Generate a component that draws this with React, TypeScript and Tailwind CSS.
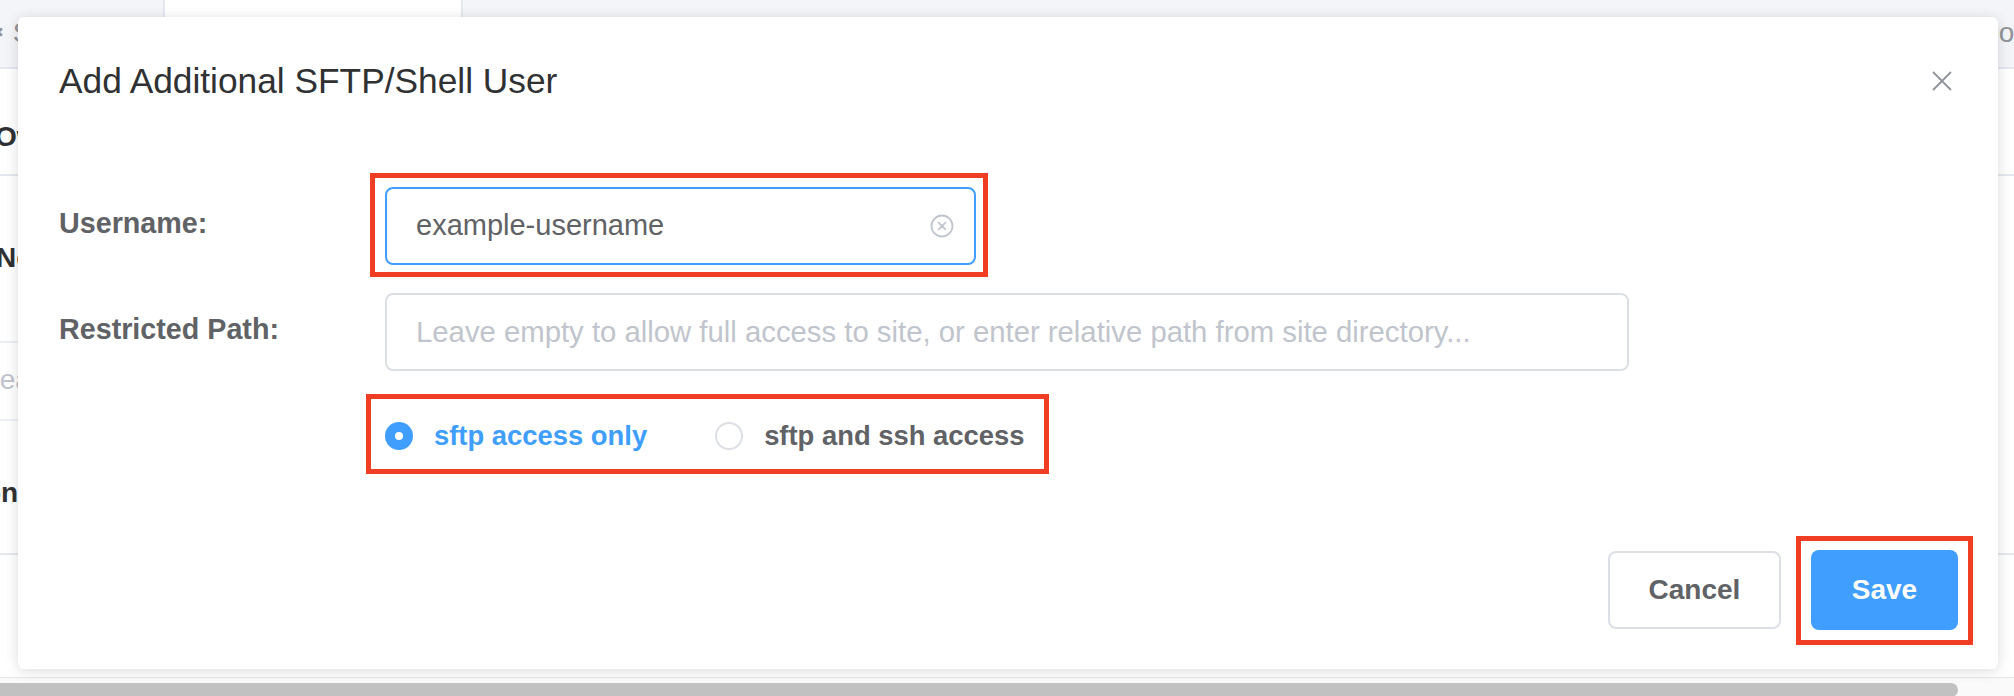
import React from 'react';

const RED_BOX = 'pointer-events-none absolute border-[5px] border-[#ef3e23]';

function Backdrop() {
  return (
    <div className="flex h-full flex-col">
      {/* tab header */}
      <div className="flex h-[69px] border-b-2 border-[#e4e7ed] bg-[#f4f5f8] text-[28px] text-[#909399]">
        <div className="w-[163px] overflow-hidden whitespace-nowrap pt-[12px]">
          <span className="ml-[-20px]">⚙ SFTP</span>
        </div>
        <div className="w-[300px] border-x-2 border-[#e4e7ed] bg-white" />
        <div className="flex flex-1 justify-end overflow-hidden whitespace-nowrap pt-[12px]">
          <span className="mr-[-16px]">Action</span>
        </div>
      </div>

      {/* rows of the page behind */}
      <div className="flex h-[107px] border-b-2 border-[#e4e7ed] text-[28px] font-bold leading-[32px] text-[#303133]">
        <div className="w-[163px] overflow-hidden whitespace-nowrap pt-[52px]">
          <span className="ml-[-5px]">Owner</span>
        </div>
      </div>
      <div className="flex h-[379px] border-b-2 border-[#e4e7ed] text-[28px] leading-[32px]">
        <div className="flex w-[163px] flex-col overflow-hidden whitespace-nowrap">
          <div className="h-[167px] border-b-2 border-[#ebeef5] pt-[66px] font-bold text-[#303133]">
            <span className="ml-[-4px]">New</span>
          </div>
          <div className="h-[78px] border-b-2 border-[#ebeef5] pt-[21px] text-[#c0c4cc]">
            <span className="ml-[-19px]">Search</span>
          </div>
          <div className="flex-1 pt-[56px] font-bold text-[#303133]">
            <span className="ml-[-16px]">one</span>
          </div>
        </div>
      </div>
      <div className="flex-1" />

      {/* horizontal scrollbar */}
      <div className="h-[19px] border-t border-[#e6e6e6] bg-[#fafafa] pt-[5px]">
        <div className="h-[14px] w-[1958px] rounded-r-full bg-[#c1c1c1]" />
      </div>
    </div>
  );
}

function ClearIcon() {
  return (
    <svg width="24" height="24" viewBox="0 0 24 24" fill="none" stroke="#c0c4cc" strokeWidth="1.8">
      <circle cx="12" cy="12" r="10.5" />
      <path d="M8.6 8.6L15.4 15.4M15.4 8.6L8.6 15.4" strokeLinecap="round" />
    </svg>
  );
}

export default function App() {
  return (
    <div className="relative h-[696px] w-full overflow-hidden bg-white font-['Liberation_Sans',Arial,sans-serif]">
      <Backdrop />

      {/* Dialog */}
      <div className="absolute left-[18px] top-[17px] w-[1980px] rounded-[6px] bg-white pb-[39px] pl-[41px] pr-[40px] pt-[40px] shadow-[0_2px_14px_rgba(0,0,0,0.14)]">
        <h2 className="text-[35.3px] leading-[48px] text-[#303133]">Add Additional SFTP/Shell User</h2>
        <button className="absolute right-[46px] top-[54px] h-5 w-5">
          <svg width="20" height="20" viewBox="0 0 20 20" fill="none" stroke="#909399" strokeWidth="1.8">
            <path d="M1 1L19 19M19 1L1 19" />
          </svg>
        </button>

        {/* Username */}
        <div className="mt-[82px] flex">
          <label className="w-[326px] text-[28.7px] font-bold leading-[72px] text-[#606266]">Username:</label>
          <div className="relative">
            <div className="flex h-[78px] w-[591px] items-center rounded-[8px] border-2 border-[#409eff] pl-[29px] pr-[20px]">
              <input
                readOnly
                value="example-username"
                className="min-w-0 flex-1 bg-transparent text-[29px] text-[#606266] outline-none"
              />
              <ClearIcon />
            </div>
            <div className={`${RED_BOX} -bottom-[12px] -left-[15px] -right-[12px] -top-[14px]`} />
          </div>
        </div>

        {/* Restricted path */}
        <div className="mt-[28px] flex">
          <label className="w-[326px] text-[28.7px] font-bold leading-[72px] text-[#606266]">Restricted Path:</label>
          <div className="flex h-[78px] w-[1244px] items-center rounded-[8px] border-2 border-[#dcdfe6] pl-[29px] pr-[20px]">
            <input
              readOnly
              placeholder="Leave empty to allow full access to site, or enter relative path from site directory..."
              className="min-w-0 flex-1 bg-transparent text-[29.3px] text-[#606266] outline-none placeholder:text-[#c0c4cc]"
            />
          </div>
        </div>

        {/* Access type */}
        <div className="mt-[45px] flex h-[40px] items-center pl-[326px]">
          <div className="relative inline-flex items-center">
            <span className="flex h-[28px] w-[28px] items-center justify-center rounded-full bg-[#409eff]">
              <span className="h-2 w-2 rounded-full bg-white" />
            </span>
            <span className="ml-[21px] text-[27.4px] font-bold leading-[32px] text-[#409eff]">sftp access only</span>
            <span className="ml-[68px] h-[28px] w-[28px] rounded-full border-2 border-[#dcdfe6] bg-white" />
            <span className="ml-[21px] text-[27.4px] font-bold leading-[32px] text-[#606266]">sftp and ssh access</span>
            <div className={`${RED_BOX} -bottom-[22px] -left-[19px] -right-[25px] -top-[26px]`} />
          </div>
        </div>

        {/* Footer */}
        <div className="mt-[94px] flex items-center justify-end gap-[30px]">
          <button className="h-[78px] w-[173px] rounded-[8px] border-2 border-[#dcdfe6] bg-white text-[28px] font-bold text-[#606266]">
            Cancel
          </button>
          <div className="relative">
            <button className="h-[80px] w-[147px] rounded-[8px] bg-[#409eff] text-[28px] font-bold text-white">Save</button>
            <div className={`${RED_BOX} -bottom-[15px] -left-[15px] -right-[15px] -top-[14px]`} />
          </div>
        </div>
      </div>
    </div>
  );
}
